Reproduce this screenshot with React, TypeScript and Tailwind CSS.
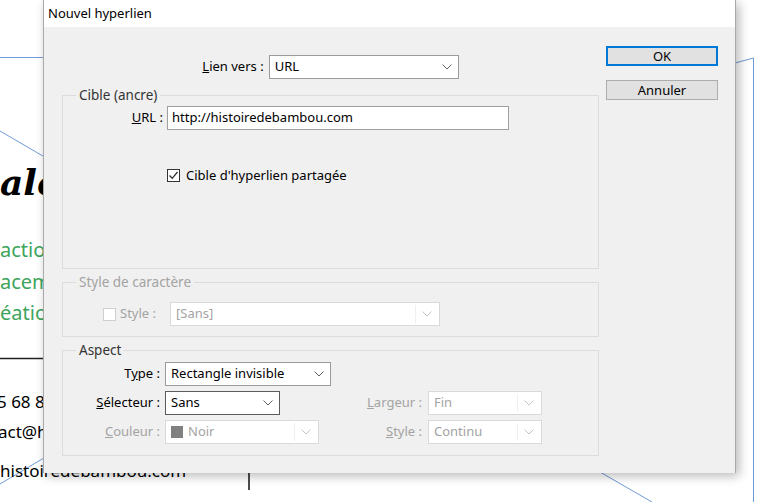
import type { ReactNode } from "react";

const FONT = "font-['Noto_Sans','Open_Sans',sans-serif]";

function Chevron({ disabled }: { disabled?: boolean }) {
  return (
    <svg width="10" height="6" viewBox="0 0 10 6" className="shrink-0">
      <path d="M0.5 0.5 L5 5 L9.5 0.5" fill="none" stroke={disabled ? "#c4c4c4" : "#5f5f5f"} strokeWidth="1" />
    </svg>
  );
}

function Select({ value, className, focused }: { value: string; className: string; focused?: boolean }) {
  return (
    <div className={`${className} flex h-[24px] items-center bg-white border ${focused ? "border-[#5c5c5c]" : "border-[#9b9b9b]"}`}>
      <span className="flex-1 truncate pl-[5px] text-black">{value}</span>
      <span className="flex w-[22px] justify-center">
        <Chevron />
      </span>
    </div>
  );
}

function DisabledSelect({ value, className, swatch }: { value: string; className: string; swatch?: boolean }) {
  return (
    <div className={`${className} flex h-[24px] border border-[#d9d9d9] bg-white p-[2px]`}>
      <div className="flex flex-1 items-center gap-[5px] pl-[3px] text-[#a3a3a3]">
        {swatch && <span className="h-[12px] w-[12px] bg-[#808080]" />}
        <span className="truncate">{value}</span>
      </div>
      <div className="flex w-[22px] items-center justify-center border-l border-[#efefef]">
        <Chevron disabled />
      </div>
    </div>
  );
}

function Group({ title, disabled, className, children }: { title: string; disabled?: boolean; className: string; children: ReactNode }) {
  return (
    <fieldset className={`${className} border border-[#dcdcdc]`}>
      <legend className={`ml-[13px] px-[3px] text-[13.5px] leading-[16px] ${disabled ? "text-[#a3a3a3]" : "text-[#333]"}`}>{title}</legend>
      {children}
    </fieldset>
  );
}

function Label({ children, className, disabled }: { children: ReactNode; className: string; disabled?: boolean }) {
  return <span className={`${className} shrink-0 text-right ${disabled ? "text-[#a3a3a3]" : "text-black"}`}>{children}</span>;
}

function Backdrop() {
  return (
    <>
      <svg className="absolute inset-0" width="768" height="502" viewBox="0 0 768 502">
        <g stroke="#6f9bd6" strokeWidth="1" fill="none">
          <line x1="0" y1="57.5" x2="120" y2="57.5" />
          <line x1="0" y1="131" x2="120" y2="201" />
          <line x1="0" y1="484" x2="120" y2="413" />
          <line x1="735" y1="63" x2="753.5" y2="58" />
          <line x1="753.5" y1="58" x2="753.5" y2="502" />
          <line x1="560" y1="449" x2="652" y2="502" />
        </g>
        <line x1="0" y1="358.5" x2="120" y2="358.5" stroke="#222" strokeWidth="1.5" />
        <line x1="249" y1="472" x2="249" y2="490" stroke="#111" strokeWidth="1.5" />
      </svg>
      {/* document content peeking out left of the dialog */}
      <div className="absolute left-0 top-[158px] w-[44px] overflow-hidden whitespace-nowrap font-['DejaVu_Serif',serif] text-[36px] font-bold italic leading-[48px] text-black">
        alo!
      </div>
      <div className={`absolute left-0 top-[234px] w-[44px] overflow-hidden whitespace-nowrap ${FONT} text-[20px] leading-[31.5px] text-[#3ca55c]`}>
        <div>actio</div>
        <div>acem</div>
        <div>éatio</div>
      </div>
      <div className={`absolute left-[-3px] top-[387px] w-[47px] overflow-hidden whitespace-nowrap ${FONT} text-[17px] leading-[30px] text-black`}>
        <div>5 68 8</div>
        <div className="ml-[1px]">act@h</div>
      </div>
      <div className={`absolute left-0 top-[456px] whitespace-nowrap ${FONT} text-[17px] leading-[30px] text-black`}>
        histoiredebambou.com
      </div>
    </>
  );
}

function Check({ checked, disabled }: { checked?: boolean; disabled?: boolean }) {
  return (
    <span className={`flex h-[13px] w-[13px] shrink-0 items-center justify-center border bg-white ${disabled ? "border-[#cfcfcf]" : "border-[#333]"}`}>
      {checked && (
        <svg width="11" height="11" viewBox="0 0 11 11">
          <path d="M1.5 5.5 L4.2 8.3 L9.5 2" fill="none" stroke="#333" strokeWidth="1.3" />
        </svg>
      )}
    </span>
  );
}

export default function App() {
  return (
    <div className={`relative h-[502px] w-[768px] overflow-hidden bg-white ${FONT} text-[13px]`}>
      <Backdrop />

      {/* Dialog window */}
      <div className="absolute left-[43px] top-0 w-[693px] border-x border-[#a9a9a9] shadow-[3px_3px_10px_rgba(0,0,0,0.28)]">
        <div className="flex h-[27px] items-center bg-white pl-[4px] text-[13px] text-black">Nouvel hyperlien</div>

        <div className="flex h-[446px] items-start bg-[#f0f0f0]">
          {/* Left column */}
          <div className="ml-[18px] mt-[28px] w-[537px]">
            <div className="flex h-[24px] items-center justify-center gap-[5px]">
              <span className="text-black">
                <span className="underline">L</span>ien vers :
              </span>
              <Select value="URL" className="w-[190px]" />
            </div>

            <Group title="Cible (ancre)" className="mt-[8px] h-[182px]">
              <div className="mt-[3px] flex h-[24px] items-center">
                <Label className="w-[100px]">
                  <span className="underline">U</span>RL :
                </Label>
                <div className="ml-[4px] flex h-[24px] w-[342px] items-center border border-[#a0a0a0] bg-white pl-[4px] text-black">
                  http://histoiredebambou.com
                </div>
              </div>
              <div className="mt-[36px] flex items-center gap-[6px] pl-[104px] text-black">
                <Check checked />
                <span>Cible d'hyperlien partagée</span>
              </div>
            </Group>

            <Group title="Style de caractère" disabled className="mt-[5px] h-[63px]">
              <div className="mt-[12px] flex h-[24px] items-center pl-[40px]">
                <Check disabled />
                <span className="ml-[4px] w-[46px] text-[#a3a3a3]">Style :</span>
                <DisabledSelect value="[Sans]" className="ml-[4px] w-[270px]" />
              </div>
            </Group>

            <Group title="Aspect" className="mt-[5px] h-[114px]">
              <div className="mt-[4px] flex flex-col gap-[5px]">
                <div className="flex h-[24px] items-center">
                  <Label className="w-[97px]">
                    T<span className="underline">y</span>pe :
                  </Label>
                  <Select value="Rectangle invisible" className="ml-[5px] w-[166px]" />
                </div>
                <div className="flex h-[24px] items-center">
                  <Label className="w-[97px]">
                    <span className="underline">S</span>électeur :
                  </Label>
                  <Select value="Sans" focused className="ml-[5px] w-[115px]" />
                  <Label disabled className="w-[142px]">
                    <span className="underline">L</span>argeur :
                  </Label>
                  <DisabledSelect value="Fin" className="ml-[6px] w-[114px]" />
                </div>
                <div className="flex h-[24px] items-center">
                  <Label disabled className="w-[97px]">
                    <span className="underline">C</span>ouleur :
                  </Label>
                  <DisabledSelect value="Noir" swatch className="ml-[5px] w-[154px]" />
                  <Label disabled className="w-[103px]">
                    <span className="underline">S</span>tyle :
                  </Label>
                  <DisabledSelect value="Continu" className="ml-[6px] w-[114px]" />
                </div>
              </div>
            </Group>
          </div>

          {/* Buttons */}
          <div className="ml-[7px] mt-[19px] flex w-[112px] flex-col">
            <button className="h-[20px] border-2 border-[#0078d7] bg-[#e1e1e1] text-[13px] leading-none text-black">OK</button>
            <button className="mt-[14px] h-[20px] border border-[#adadad] bg-[#e1e1e1] text-[13px] leading-none text-black">Annuler</button>
          </div>
        </div>
      </div>
    </div>
  );
}
